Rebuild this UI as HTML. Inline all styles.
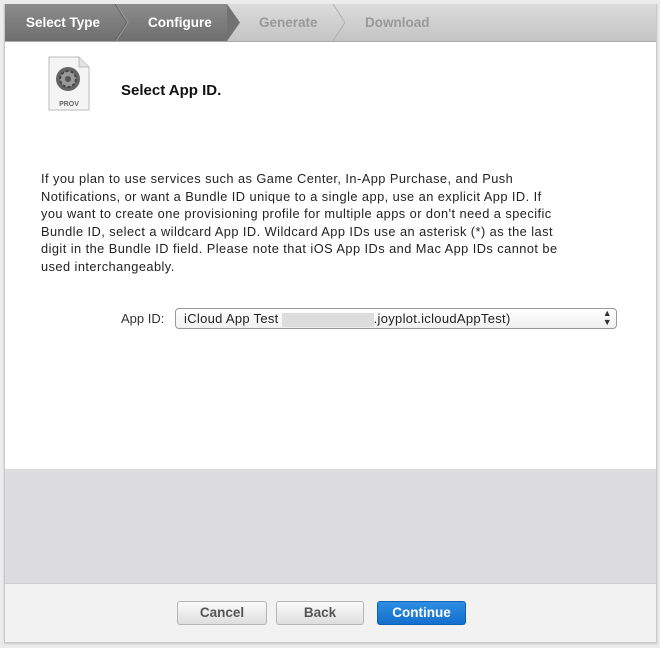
<!DOCTYPE html>
<html><head><style>
body{margin:0;width:660px;height:648px;background:#ececec;font-family:"Liberation Sans",sans-serif;position:relative;overflow:hidden}
.panel{position:absolute;left:4px;top:4px;width:651px;height:638px;background:#f2f2f2;border:1px solid #c8c8c8;border-top:none;box-shadow:0 1px 2px rgba(0,0,0,.15)}
.tabs{position:absolute;left:0;top:0;width:651px;height:37px;background:linear-gradient(#dcdcdc,#c4c4c4);border-bottom:1px solid #aaa}
.act{position:absolute;left:0;top:0;width:222px;height:37px;background:linear-gradient(#8c8c8c,#6e6e6e)}
.tab{position:absolute;top:11px;font-size:13.5px;font-weight:bold}
.content{position:absolute;left:0;top:38px;width:651px;height:427px;background:#fff}
.gray{position:absolute;left:0;top:465px;width:651px;height:114px;background:#dcdcde;border-bottom:1px solid #cfcfcf}
p{position:absolute;left:36px;top:128px;margin:0;font-size:12.8px;line-height:17.5px;color:#222;white-space:nowrap;letter-spacing:0.45px}
.btn{position:absolute;top:597px;height:22px;border:1px solid #b5b5b5;border-radius:3px;background:linear-gradient(#fbfbfb,#dedede);font-size:13.5px;font-weight:bold;color:#555;text-align:center;line-height:22px}
</style></head><body>
<div class="panel">
 <div class="tabs">
  <div class="act"></div>
  <svg style="position:absolute;left:0;top:0" width="340" height="37">
   <polygon points="222,0 235,18.5 222,37" fill="#727272"/>
   <polyline points="110,0 122,18.5 110,37" fill="none" stroke="#5f5f5f" stroke-width="1"/>
   <polyline points="111,0 123,18.5 111,37" fill="none" stroke="#999" stroke-width="1"/>
   <polyline points="328,0 340,18.5 328,37" fill="none" stroke="#b0b0b0" stroke-width="1"/>
  </svg>
  <div class="tab" style="left:21px;color:#fff">Select Type</div>
  <div class="tab" style="left:143px;color:#fff">Configure</div>
  <div class="tab" style="left:254px;color:#999">Generate</div>
  <div class="tab" style="left:360px;color:#999">Download</div>
 </div>
 <div class="content">
  <svg style="position:absolute;left:42px;top:14px" width="44" height="56">
   <path d="M2 1H32L42 11V54H2Z" fill="#f4f4f4" stroke="#bbb"/>
   <path d="M32 1V11H42" fill="#e2e2e2" stroke="#bbb"/>
   <circle cx="21" cy="23" r="12" fill="#666"/>
   <circle cx="21" cy="23" r="8" fill="#999" stroke="#444" stroke-width="2" stroke-dasharray="3 2"/>
   <circle cx="21" cy="23" r="3" fill="#555"/>
   <text x="22" y="50" font-size="7" font-weight="bold" fill="#666" text-anchor="middle" font-family="Liberation Sans">PROV</text>
  </svg>
  <div style="position:absolute;left:116px;top:40px;font-size:15px;font-weight:bold;color:#111">Select App ID.</div>
  <p>If you plan to use services such as Game Center, In-App Purchase, and Push<br>Notifications, or want a Bundle ID unique to a single app, use an explicit App ID. If<br>you want to create one provisioning profile for multiple apps or don't need a specific<br>Bundle ID, select a wildcard App ID. Wildcard App IDs use an asterisk (*) as the last<br>digit in the Bundle ID field. Please note that iOS App IDs and Mac App IDs cannot be<br>used interchangeably.</p>
  <div style="position:absolute;left:116px;top:269px;font-size:13px;color:#333">App ID:</div>
  <div style="position:absolute;left:170px;top:266px;width:440px;height:19px;border:1px solid #999;border-radius:4px;background:linear-gradient(#fff,#f0f0f0);font-size:13px;line-height:19px;color:#222;letter-spacing:0.3px">
   <span style="margin-left:8px">iCloud App Test</span><span style="display:inline-block;width:92px;height:14px;background:#ddd;vertical-align:middle;margin:0 0 0 3px"></span><span>.joyplot.icloudAppTest)</span>
   <span style="position:absolute;right:4px;top:0;font-size:9px;line-height:9px;color:#333">▲<br>▼</span>
  </div>
 </div>
 <div class="gray"></div>
 <div class="btn" style="left:172px;width:88px">Cancel</div>
 <div class="btn" style="left:271px;width:86px">Back</div>
 <div class="btn" style="left:372px;width:87px;background:linear-gradient(#2d8ee3,#136fcc);border-color:#1060b0;color:#fff">Continue</div>
</div>
</body></html>
